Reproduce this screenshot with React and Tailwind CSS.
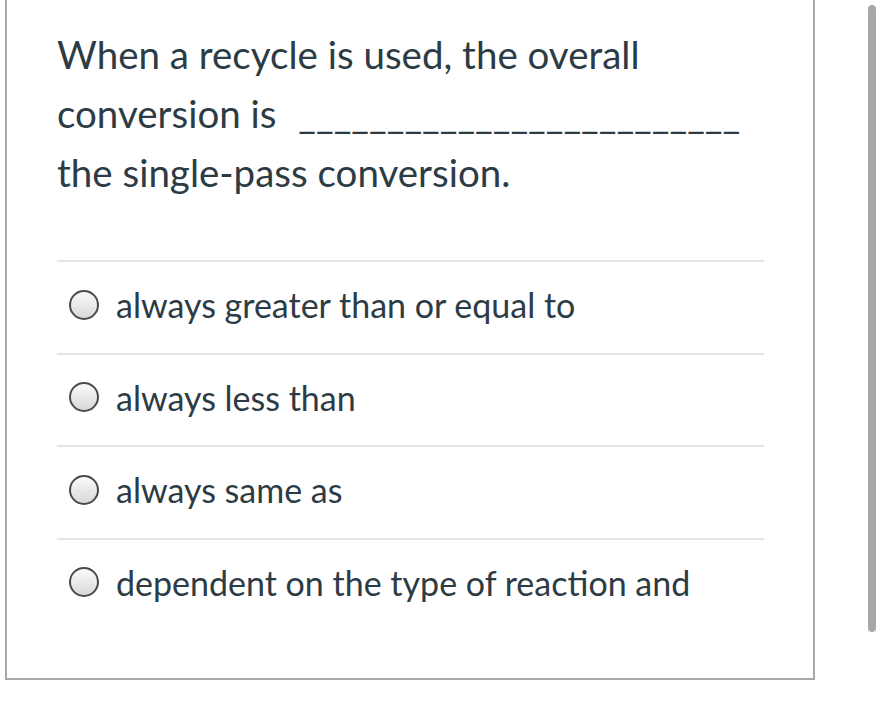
import React from 'react';

const options = [
  'always greater than or equal to',
  'always less than',
  'always same as',
  'dependent on the type of reaction and',
];

function Radio() {
  return (
    <span className="shrink-0 w-[30px] h-[30px] rounded-full border-2 border-[#4a4a4a] bg-gradient-to-b from-[#fafafa] to-[#d9d9d9]" />
  );
}

export default function App() {
  return (
    <div className="relative w-[883px] h-[706px] bg-white overflow-hidden font-['Lato',sans-serif] text-[#2d3b45]">
      <div className="absolute right-[7px] top-[5px] w-[8px] h-[627px] rounded-full bg-[#a8a8a8]" />
      <div className="ml-[5px] mt-[-20px] w-[810px] h-[700px] border-2 border-[#a8a8a8] bg-white">
        <div className="pl-[50px] pr-[49px] pt-[43px]">
          <p className="text-[38.5px] leading-[59px]">
            When a recycle is used, the overall
            <br />
            conversion is{' '}
            <span className="inline-block ml-[12px]">_________________________</span>
            <br />
            the single-pass conversion.
          </p>
          <ul className="mt-[58px]">
            {options.map((opt) => (
              <li
                key={opt}
                className="flex items-center gap-[17px] h-[92.5px] pl-[12px] pb-[5px] border-t-2 border-[#e4e4e4]"
              >
                <Radio />
                <span className="text-[34px]">{opt}</span>
              </li>
            ))}
          </ul>
        </div>
      </div>
    </div>
  );
}
